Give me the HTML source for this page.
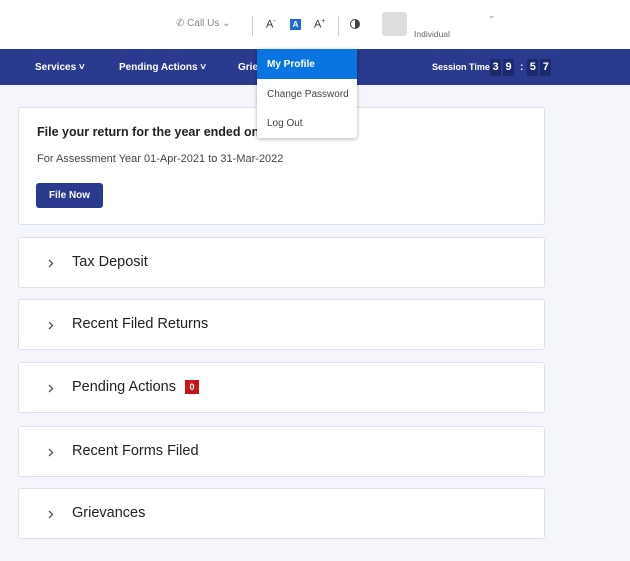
<!DOCTYPE html>
<html><head><meta charset="utf-8"><style>
*{margin:0;padding:0;box-sizing:border-box}
body{width:630px;height:561px;overflow:hidden;background:#f5f6fb;font-family:"Liberation Sans",sans-serif;position:relative;color:#222}
.top{position:absolute;left:0;top:0;width:630px;height:49px;background:#fff}
.nav{position:absolute;left:0;top:49px;width:630px;height:36px;background:#2a3a8e;color:#fff;font-size:10px;font-weight:bold}
.nav span{position:absolute;top:13px}
.digit{display:inline-block;background:#1c2a6e;width:11px;height:17px;text-align:center;line-height:17px;font-size:11px;margin-right:2px;font-style:normal}
.card{position:absolute;left:18px;width:527px;background:#fff;border:1px solid #dcdfec;border-radius:3px}
.acc{height:51px}
.acc svg{position:absolute;left:29px;top:21px}
.acc .t{position:absolute;left:53px;top:16px;font-size:14.5px;color:#222}
.dd{position:absolute;left:257px;top:49px;width:100px;height:89px;background:#fff;box-shadow:0 1px 4px rgba(0,0,0,.3);border-radius:0 0 3px 3px;font-size:10px;color:#444}
.dd div{position:absolute;left:10px}
</style></head><body>
<div class="top">
  <div style="position:absolute;left:176px;top:18px;font-size:10px;color:#888">&#9990; Call Us &#8964;</div>
  <div style="position:absolute;left:252px;top:16px;width:1px;height:20px;background:#ccc"></div>
  <div style="position:absolute;left:266px;top:18px;font-size:11px;color:#333">A<sup style="font-size:7px">-</sup></div>
  <div style="position:absolute;left:290px;top:19px;width:11px;height:11px;background:#1a6fd0;color:#fff;font-size:8px;text-align:center;line-height:11px;font-weight:bold">A</div>
  <div style="position:absolute;left:314px;top:18px;font-size:11px;color:#333">A<sup style="font-size:7px">+</sup></div>
  <div style="position:absolute;left:338px;top:16px;width:1px;height:20px;background:#ccc"></div>
  <div style="position:absolute;left:350px;top:19px;width:10px;height:10px;border:1.5px solid #444;border-radius:50%;background:linear-gradient(90deg,#fff 50%,#444 50%)"></div>
  <div style="position:absolute;left:382px;top:12px;width:25px;height:24px;background:#ddd;border-radius:3px"></div>
  <div style="position:absolute;left:414px;top:29px;font-size:8.5px;color:#666">Individual</div>
  <div style="position:absolute;left:488px;top:10px;font-size:9px;color:#888">&#8964;</div>
</div>
<div class="nav">
  <span style="left:35px">Services &#709;</span>
  <span style="left:119px">Pending Actions &#709;</span>
  <span style="left:238px">Grie</span>
  <span style="left:432px;top:13px;font-size:9px">Session Time</span>
  <span style="left:490px;top:10px"><i class="digit">3</i><i class="digit">9</i><i style="font-style:normal;margin:0 4px">:</i><i class="digit">5</i><i class="digit">7</i></span>
</div>
<div class="card" style="top:107px;height:118px">
  <div style="position:absolute;left:18px;top:17px;font-size:12.5px;font-weight:bold;color:#222">File your return for the year ended on 31</div>
  <div style="position:absolute;left:18px;top:45px;font-size:11px;color:#444">For Assessment Year 01-Apr-2021 to 31-Mar-2022</div>
  <div style="position:absolute;left:17px;top:75px;width:67px;height:25px;background:#2a3a8e;border-radius:3px;color:#fff;font-size:10px;font-weight:bold;text-align:center;line-height:25px">File Now</div>
</div>
<div class="card acc" style="top:237px"><svg width="6" height="9"><path d="M1 1l3.5 3.5L1 8" fill="none" stroke="#555" stroke-width="1.3"/></svg><span class="t">Tax Deposit</span></div>
<div class="card acc" style="top:299px"><svg width="6" height="9"><path d="M1 1l3.5 3.5L1 8" fill="none" stroke="#555" stroke-width="1.3"/></svg><span class="t">Recent Filed Returns</span></div>
<div class="card acc" style="top:362px"><svg width="6" height="9"><path d="M1 1l3.5 3.5L1 8" fill="none" stroke="#555" stroke-width="1.3"/></svg><span class="t">Pending Actions <span style="display:inline-block;background:#c8161d;color:#fff;font-size:9px;font-weight:bold;width:14px;height:14px;text-align:center;line-height:14px;margin-left:5px;vertical-align:1px">0</span></span></div>
<div class="card acc" style="top:426px"><svg width="6" height="9"><path d="M1 1l3.5 3.5L1 8" fill="none" stroke="#555" stroke-width="1.3"/></svg><span class="t">Recent Forms Filed</span></div>
<div class="card acc" style="top:488px"><svg width="6" height="9"><path d="M1 1l3.5 3.5L1 8" fill="none" stroke="#555" stroke-width="1.3"/></svg><span class="t">Grievances</span></div>
<div class="dd">
  <div style="left:0;top:0;width:100px;height:30px;background:#0a75e0"></div>
  <div style="top:10px;color:#fff;font-weight:bold">My Profile</div>
  <div style="top:40px">Change Password</div>
  <div style="top:69px">Log Out</div>
</div>
</body></html>
